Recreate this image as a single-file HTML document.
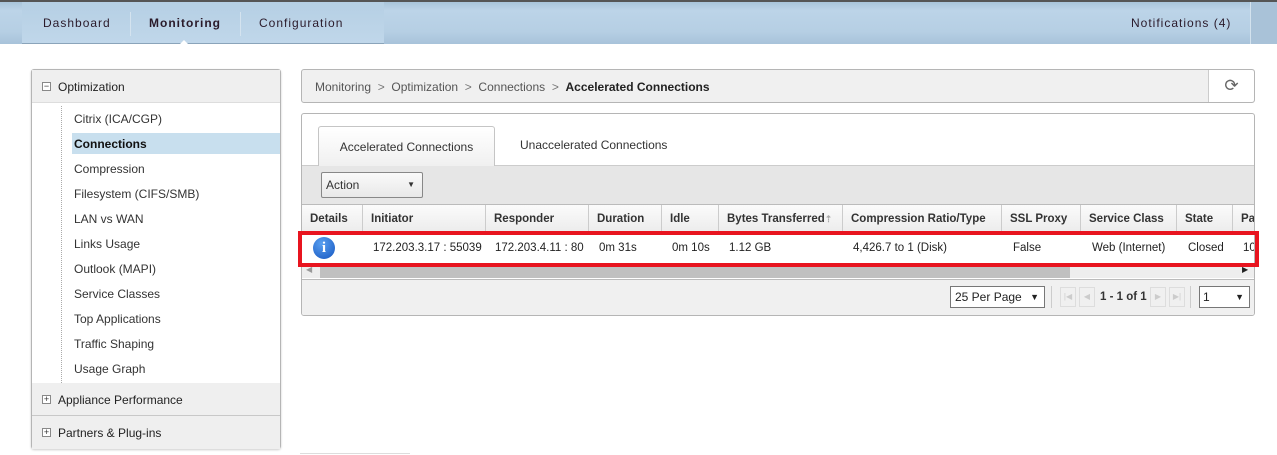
<!DOCTYPE html>
<html><head><style>
*{box-sizing:border-box;margin:0;padding:0}
body{width:1277px;height:455px;background:#fff;font-family:"Liberation Sans",sans-serif;font-size:12px;color:#222;position:relative;overflow:hidden}
.abs{position:absolute}
.hdr{left:0;top:0;width:1277px;height:44px;background:linear-gradient(#a9c4da,#bcd4e8 20%,#b6cfe4 70%,#a8c3da);border-top:2px solid #555}
.nav{top:1px;height:44px;line-height:44px;font-size:12px;letter-spacing:1px;color:#2a1a2a}
.sep{top:12px;width:1px;height:24px;background:#93aabf;border-right:1px solid #d4e3ef}
.lp{left:31px;top:69px;width:250px;height:380px;border:1px solid #b5b5b5;border-radius:3px;background:#fff;box-shadow:0 1px 2px #ccc}
.sec{left:0;width:248px;background:#efefef;font-size:12px;color:#222}
.item{left:42px;font-size:12px;color:#333}
.pm{width:9px;height:9px;border:1px solid #888;background:#fff;font-size:9px;line-height:7px;text-align:center;color:#333}
.th{top:205px;height:27px;line-height:28px;font-weight:bold;color:#333;border-right:1px solid #ccc;padding-left:8px;background:linear-gradient(#fbfbfb,#ececec);font-size:11.5px;white-space:nowrap}
.td{top:232px;height:33px;line-height:33px;color:#222;font-size:11.5px;white-space:nowrap}
</style></head><body>
<div class="abs hdr"></div>
<div class="abs" style="left:22px;top:2px;width:362px;height:42px;background:linear-gradient(#b5cfe4,#c0d7ea);border-bottom:1px solid #8aa4ba"></div>
<div class="abs nav" style="left:43px">Dashboard</div>
<div class="abs sep" style="left:130px"></div>
<div class="abs nav" style="left:149px;font-weight:bold">Monitoring</div>
<div class="abs sep" style="left:240px"></div>
<div class="abs nav" style="left:259px">Configuration</div>
<div class="abs" style="left:179px;top:40px;width:0;height:0;border-left:5px solid transparent;border-right:5px solid transparent;border-bottom:5px solid #fff"></div>
<div class="abs nav" style="left:1131px">Notifications (4)</div>
<div class="abs" style="left:1250px;top:2px;width:27px;height:42px;background:#a9c2d8;border-left:1px solid #d3e2ee"></div>

<div class="abs lp">
 <div class="abs sec" style="top:0;height:33px;line-height:34px;border-bottom:1px solid #ddd"><div class="abs pm" style="left:10px;top:12px">−</div><span class="abs" style="left:26px">Optimization</span></div>
 <div class="abs" style="left:29px;top:36px;width:0;height:305px;border-left:1px dotted #aaa"></div>
 <div class="abs" style="left:40px;top:63px;width:208px;height:21px;background:#c8dfee"></div>
 <div class="abs item" style="top:42px">Citrix (ICA/CGP)</div>
 <div class="abs item" style="top:67px;font-weight:bold;color:#111">Connections</div>
 <div class="abs item" style="top:92px">Compression</div>
 <div class="abs item" style="top:117px">Filesystem (CIFS/SMB)</div>
 <div class="abs item" style="top:142px">LAN vs WAN</div>
 <div class="abs item" style="top:167px">Links Usage</div>
 <div class="abs item" style="top:192px">Outlook (MAPI)</div>
 <div class="abs item" style="top:217px">Service Classes</div>
 <div class="abs item" style="top:242px">Top Applications</div>
 <div class="abs item" style="top:267px">Traffic Shaping</div>
 <div class="abs item" style="top:292px">Usage Graph</div>
 <div class="abs sec" style="top:313px;height:33px;line-height:34px;border-bottom:1px solid #c8c8c8"><div class="abs pm" style="left:10px;top:12px">+</div><span class="abs" style="left:26px">Appliance Performance</span></div>
 <div class="abs sec" style="top:346px;height:33px;line-height:34px"><div class="abs pm" style="left:10px;top:12px">+</div><span class="abs" style="left:26px">Partners &amp; Plug-ins</span></div>
</div>

<div class="abs" style="left:301px;top:69px;width:954px;height:34px;border:1px solid #b5b5b5;border-radius:3px;background:#f0f0f0"></div>
<div class="abs" style="left:315px;top:70px;line-height:34px;color:#555">Monitoring &nbsp;<span style="color:#777">&gt;</span>&nbsp; Optimization &nbsp;<span style="color:#777">&gt;</span>&nbsp; Connections &nbsp;<span style="color:#777">&gt;</span>&nbsp; <b style="color:#222">Accelerated Connections</b></div>
<div class="abs" style="left:1208px;top:70px;width:46px;height:32px;background:#fff;border-left:1px solid #ccc;border-radius:0 3px 3px 0;text-align:center;line-height:32px;font-size:17px;color:#666">⟳</div>

<div class="abs" style="left:301px;top:113px;width:954px;height:203px;border:1px solid #b5b5b5;border-radius:3px;background:#fff;overflow:hidden">
 <div class="abs" style="left:0;top:51px;width:954px;height:40px;background:#e6e6e6;border-top:1px solid #ccc"></div>
 <div class="abs" style="left:16px;top:12px;width:177px;height:40px;background:linear-gradient(#fff,#f0f0f0);border:1px solid #c5c5c5;border-bottom:none;border-radius:3px 3px 0 0;text-align:center;line-height:40px;color:#333">Accelerated Connections</div>
 <div class="abs" style="left:218px;top:12px;line-height:38px;color:#333">Unaccelerated Connections</div>
 <div class="abs" style="left:19px;top:58px;width:102px;height:26px;border:1px solid #888;border-radius:2px;background:linear-gradient(#fafafa,#e8e8e8);line-height:24px;padding-left:4px;color:#333">Action<span class="abs" style="right:7px;top:0;font-size:8px">▼</span></div>
 <div class="abs" style="left:0;top:165px;width:954px;height:38px;background:#f0f0f0;border-top:1px solid #bbb"></div>
 <div class="abs" style="left:0;top:153px;width:954px;height:11px;background:#eee"></div>
 <div class="abs" style="left:18px;top:153px;width:750px;height:11px;background:#c0c0c0"></div>
 <div class="abs" style="left:4px;top:151px;font-size:8px;color:#999">◀</div>
 <div class="abs" style="left:940px;top:151px;font-size:8px;color:#222">▶</div>
 <div class="abs" style="left:648px;top:172px;width:95px;height:22px;border:1px solid #777;background:#fff;line-height:20px;padding-left:4px;color:#222">25 Per Page<span class="abs" style="right:5px;top:0;font-size:9px">▼</span></div>
 <div class="abs" style="left:749px;top:172px;width:1px;height:22px;background:#ccc"></div>
 <div class="abs" style="left:758px;top:173px;width:16px;height:20px;border:1px solid #ddd;color:#ccc;font-size:8px;line-height:18px;text-align:center">|◀</div>
 <div class="abs" style="left:777px;top:173px;width:16px;height:20px;border:1px solid #ddd;color:#ccc;font-size:8px;line-height:18px;text-align:center">◀</div>
 <div class="abs" style="left:798px;top:172px;line-height:22px;font-weight:bold;color:#333;font-size:11.5px">1 - 1 of 1</div>
 <div class="abs" style="left:848px;top:173px;width:16px;height:20px;border:1px solid #ddd;color:#ccc;font-size:8px;line-height:18px;text-align:center">▶</div>
 <div class="abs" style="left:867px;top:173px;width:16px;height:20px;border:1px solid #ddd;color:#ccc;font-size:8px;line-height:18px;text-align:center">▶|</div>
 <div class="abs" style="left:888px;top:172px;width:1px;height:22px;background:#ccc"></div>
 <div class="abs" style="left:897px;top:172px;width:51px;height:22px;border:1px solid #777;background:#fff;line-height:20px;padding-left:3px;color:#222">1<span class="abs" style="right:5px;top:0;font-size:9px">▼</span></div>
</div>

<div class="abs" style="left:302px;top:204px;width:952px;height:1px;background:#bbb"></div>
<div class="abs th" style="left:302px;width:61px">Details</div>
<div class="abs th" style="left:363px;width:123px">Initiator</div>
<div class="abs th" style="left:486px;width:103px">Responder</div>
<div class="abs th" style="left:589px;width:73px">Duration</div>
<div class="abs th" style="left:662px;width:57px">Idle</div>
<div class="abs th" style="left:719px;width:124px">Bytes Transferred<span style="color:#aaa;font-size:9px">⇡</span></div>
<div class="abs th" style="left:843px;width:159px">Compression Ratio/Type</div>
<div class="abs th" style="left:1002px;width:79px">SSL Proxy</div>
<div class="abs th" style="left:1081px;width:96px">Service Class</div>
<div class="abs th" style="left:1177px;width:56px">State</div>
<div class="abs th" style="left:1233px;width:21px;border-right:none;overflow:hidden">Pa</div>

<div class="abs" style="left:313px;top:237px;width:22px;height:22px;border-radius:50%;background:radial-gradient(circle at 40% 30%,#5aa0f0,#1455c0);color:#fff;font-weight:bold;font-size:15px;line-height:22px;text-align:center;font-family:'Liberation Serif',serif">i</div>
<div class="abs td" style="left:373px">172.203.3.17 : 55039</div>
<div class="abs td" style="left:495px">172.203.4.11 : 80</div>
<div class="abs td" style="left:599px">0m 31s</div>
<div class="abs td" style="left:672px">0m 10s</div>
<div class="abs td" style="left:729px">1.12 GB</div>
<div class="abs td" style="left:853px">4,426.7 to 1 (Disk)</div>
<div class="abs td" style="left:1013px">False</div>
<div class="abs td" style="left:1092px">Web (Internet)</div>
<div class="abs td" style="left:1188px">Closed</div>
<div class="abs td" style="left:1243px;width:11px;overflow:hidden">10</div>
<div class="abs" style="left:298px;top:231px;width:961px;height:36px;border:4px solid #e8141f"></div>
<div class="abs" style="left:300px;top:453px;width:110px;height:1px;background:#ddd"></div>
</body></html>
